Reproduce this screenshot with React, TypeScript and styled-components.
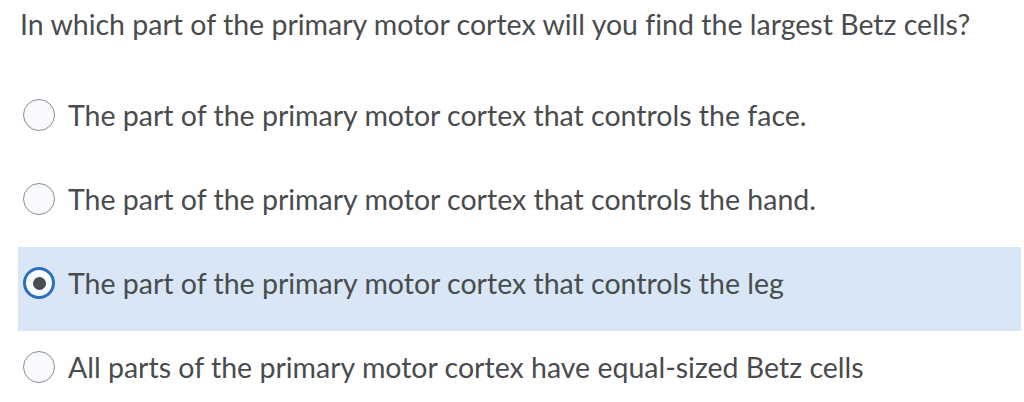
import React, { useState } from 'react';
import styled, { createGlobalStyle } from 'styled-components';

const GlobalStyle = createGlobalStyle`
  html, body {
    margin: 0;
    padding: 0;
    background: #ffffff;
  }
  body {
    font-family: Lato, "Open Sans", sans-serif;
    font-variant-ligatures: none;
    color: #494c4e;
  }
`;

const choices = [
  'The part of the primary motor cortex that controls the face.',
  'The part of the primary motor cortex that controls the hand.',
  'The part of the primary motor cortex that controls the leg',
  'All parts of the primary motor cortex have equal-sized Betz cells',
];

const App = () => {
  const [picked, setPicked] = useState(2);

  return (
    <>
      <GlobalStyle />
      <Question>
        <Prompt>In which part of the primary motor cortex will you find the largest Betz cells?</Prompt>
        <ChoiceList role="radiogroup">
          {choices.map((text, i) => (
            <Choice key={i} $selected={picked === i} onClick={() => setPicked(i)}>
              <Radio $checked={picked === i} role="radio" aria-checked={picked === i} />
              <ChoiceText>{text}</ChoiceText>
            </Choice>
          ))}
        </ChoiceList>
      </Question>
    </>
  );
};

const Question = styled.div`
  width: 1003px;
  padding-left: 18px;
`;

const Prompt = styled.div`
  height: 79px;
  box-sizing: border-box;
  padding: 7px 0 0 2px;
  font-size: 28.5px;
  line-height: 34px;
`;

const ChoiceList = styled.div`
  display: flex;
  flex-direction: column;
`;

const Choice = styled.div<{ $selected: boolean }>`
  height: 84px;
  box-sizing: border-box;
  padding: 20px 0 0 5px;
  display: flex;
  align-items: flex-start;
  gap: 13px;
  background: ${(p) => (p.$selected ? '#d8e6f5' : 'transparent')};
  cursor: pointer;
`;

const Radio = styled.span<{ $checked: boolean }>`
  flex: none;
  width: 32px;
  height: 32px;
  box-sizing: border-box;
  border-radius: 50%;
  background: #f9fafe;
  border: ${(p) => (p.$checked ? '3px solid #2a6ebd' : '1.5px solid #8a8e93')};
  display: flex;
  align-items: center;
  justify-content: center;

  &::after {
    content: '';
    display: ${(p) => (p.$checked ? 'block' : 'none')};
    width: 13px;
    height: 13px;
    border-radius: 50%;
    background: #494c4e;
  }
`;

const ChoiceText = styled.span`
  font-size: 28.5px;
  line-height: 32px;
`;

export default App;
